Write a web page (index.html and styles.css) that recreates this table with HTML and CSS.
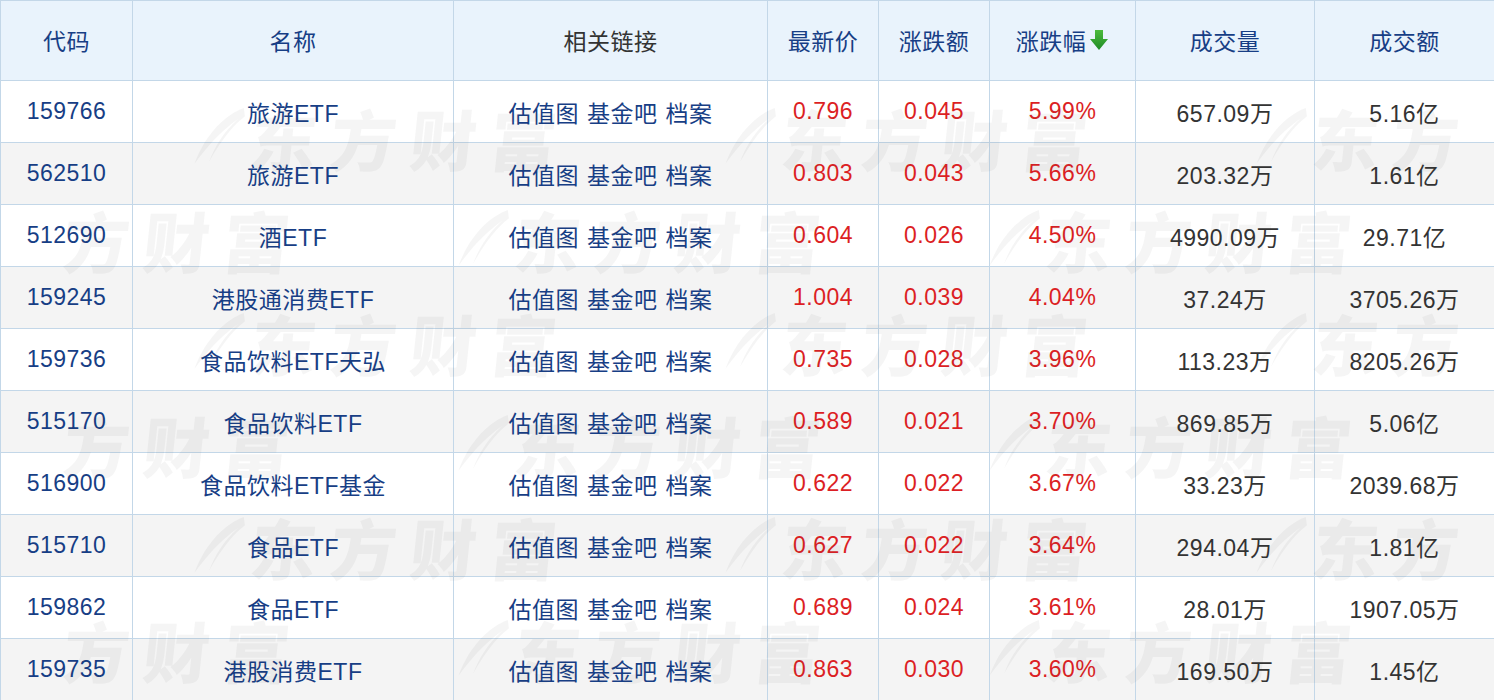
FILE: index.html
```html
<!DOCTYPE html>
<html lang="zh-CN">
<head>
<meta charset="utf-8">
<title>ETF</title>
<link rel="stylesheet" href="styles.css">
</head>
<body>
<div class="wrap">
<table class="grid">
  <colgroup>
    <col class="c1"><col class="c2"><col class="c3"><col class="c4"><col class="c5"><col class="c6"><col class="c7"><col class="c8">
  </colgroup>
  <thead>
    <tr>
      <th>代码</th>
      <th>名称</th>
      <th class="dark">相关链接</th>
      <th>最新价</th>
      <th>涨跌额</th>
      <th><span class="sort">涨跌幅<svg class="arrow" width="20" height="22" viewBox="0 0 20 22"><defs><linearGradient id="g" x1="0" y1="0" x2="0" y2="1"><stop offset="0" stop-color="#4cbb3c"/><stop offset="1" stop-color="#1f8a26"/></linearGradient></defs><path d="M6 1h8v9h5L10 21 1 10h5z" fill="url(#g)"/></svg></span></th>
      <th>成交量</th>
      <th>成交额</th>
    </tr>
  </thead>
  <tbody>
    <tr><td class="blue">159766</td><td class="blue">旅游ETF</td><td class="links"><a>估值图</a><a>基金吧</a><a>档案</a></td><td class="red">0.796</td><td class="red">0.045</td><td class="red">5.99%</td><td>657.09万</td><td>5.16亿</td></tr>
    <tr><td class="blue">562510</td><td class="blue">旅游ETF</td><td class="links"><a>估值图</a><a>基金吧</a><a>档案</a></td><td class="red">0.803</td><td class="red">0.043</td><td class="red">5.66%</td><td>203.32万</td><td>1.61亿</td></tr>
    <tr><td class="blue">512690</td><td class="blue">酒ETF</td><td class="links"><a>估值图</a><a>基金吧</a><a>档案</a></td><td class="red">0.604</td><td class="red">0.026</td><td class="red">4.50%</td><td>4990.09万</td><td>29.71亿</td></tr>
    <tr><td class="blue">159245</td><td class="blue">港股通消费ETF</td><td class="links"><a>估值图</a><a>基金吧</a><a>档案</a></td><td class="red">1.004</td><td class="red">0.039</td><td class="red">4.04%</td><td>37.24万</td><td>3705.26万</td></tr>
    <tr><td class="blue">159736</td><td class="blue">食品饮料ETF天弘</td><td class="links"><a>估值图</a><a>基金吧</a><a>档案</a></td><td class="red">0.735</td><td class="red">0.028</td><td class="red">3.96%</td><td>113.23万</td><td>8205.26万</td></tr>
    <tr><td class="blue">515170</td><td class="blue">食品饮料ETF</td><td class="links"><a>估值图</a><a>基金吧</a><a>档案</a></td><td class="red">0.589</td><td class="red">0.021</td><td class="red">3.70%</td><td>869.85万</td><td>5.06亿</td></tr>
    <tr><td class="blue">516900</td><td class="blue">食品饮料ETF基金</td><td class="links"><a>估值图</a><a>基金吧</a><a>档案</a></td><td class="red">0.622</td><td class="red">0.022</td><td class="red">3.67%</td><td>33.23万</td><td>2039.68万</td></tr>
    <tr><td class="blue">515710</td><td class="blue">食品ETF</td><td class="links"><a>估值图</a><a>基金吧</a><a>档案</a></td><td class="red">0.627</td><td class="red">0.022</td><td class="red">3.64%</td><td>294.04万</td><td>1.81亿</td></tr>
    <tr><td class="blue">159862</td><td class="blue">食品ETF</td><td class="links"><a>估值图</a><a>基金吧</a><a>档案</a></td><td class="red">0.689</td><td class="red">0.024</td><td class="red">3.61%</td><td>28.01万</td><td>1907.05万</td></tr>
    <tr><td class="blue">159735</td><td class="blue">港股消费ETF</td><td class="links"><a>估值图</a><a>基金吧</a><a>档案</a></td><td class="red">0.863</td><td class="red">0.030</td><td class="red">3.60%</td><td>169.50万</td><td>1.45亿</td></tr>
  </tbody>
</table>
<div class="wm" aria-hidden="true">
  <div class="wm-row odd"><span class="mark"><svg class="logo" viewBox="0 0 50 60"><path d="M46 2C30 8 12 26 4 56c10-16 20-30 38-44-12 12-20 26-24 42C26 36 36 20 48 10z"/></svg>东方财富</span><span class="mark"><svg class="logo" viewBox="0 0 50 60"><path d="M46 2C30 8 12 26 4 56c10-16 20-30 38-44-12 12-20 26-24 42C26 36 36 20 48 10z"/></svg>东方财富</span><span class="mark tail"><svg class="logo" viewBox="0 0 50 60"><path d="M46 2C30 8 12 26 4 56c10-16 20-30 38-44-12 12-20 26-24 42C26 36 36 20 48 10z"/></svg>东方</span></div>
  <div class="wm-row even"><span class="mark head">方财富</span><span class="mark"><svg class="logo" viewBox="0 0 50 60"><path d="M46 2C30 8 12 26 4 56c10-16 20-30 38-44-12 12-20 26-24 42C26 36 36 20 48 10z"/></svg>东方财富</span><span class="mark"><svg class="logo" viewBox="0 0 50 60"><path d="M46 2C30 8 12 26 4 56c10-16 20-30 38-44-12 12-20 26-24 42C26 36 36 20 48 10z"/></svg>东方财富</span></div>
  <div class="wm-row odd"><span class="mark"><svg class="logo" viewBox="0 0 50 60"><path d="M46 2C30 8 12 26 4 56c10-16 20-30 38-44-12 12-20 26-24 42C26 36 36 20 48 10z"/></svg>东方财富</span><span class="mark"><svg class="logo" viewBox="0 0 50 60"><path d="M46 2C30 8 12 26 4 56c10-16 20-30 38-44-12 12-20 26-24 42C26 36 36 20 48 10z"/></svg>东方财富</span><span class="mark tail"><svg class="logo" viewBox="0 0 50 60"><path d="M46 2C30 8 12 26 4 56c10-16 20-30 38-44-12 12-20 26-24 42C26 36 36 20 48 10z"/></svg>东方</span></div>
  <div class="wm-row even"><span class="mark head">方财富</span><span class="mark"><svg class="logo" viewBox="0 0 50 60"><path d="M46 2C30 8 12 26 4 56c10-16 20-30 38-44-12 12-20 26-24 42C26 36 36 20 48 10z"/></svg>东方财富</span><span class="mark"><svg class="logo" viewBox="0 0 50 60"><path d="M46 2C30 8 12 26 4 56c10-16 20-30 38-44-12 12-20 26-24 42C26 36 36 20 48 10z"/></svg>东方财富</span></div>
  <div class="wm-row odd"><span class="mark"><svg class="logo" viewBox="0 0 50 60"><path d="M46 2C30 8 12 26 4 56c10-16 20-30 38-44-12 12-20 26-24 42C26 36 36 20 48 10z"/></svg>东方财富</span><span class="mark"><svg class="logo" viewBox="0 0 50 60"><path d="M46 2C30 8 12 26 4 56c10-16 20-30 38-44-12 12-20 26-24 42C26 36 36 20 48 10z"/></svg>东方财富</span><span class="mark tail"><svg class="logo" viewBox="0 0 50 60"><path d="M46 2C30 8 12 26 4 56c10-16 20-30 38-44-12 12-20 26-24 42C26 36 36 20 48 10z"/></svg>东方</span></div>
  <div class="wm-row even"><span class="mark head">方财富</span><span class="mark"><svg class="logo" viewBox="0 0 50 60"><path d="M46 2C30 8 12 26 4 56c10-16 20-30 38-44-12 12-20 26-24 42C26 36 36 20 48 10z"/></svg>东方财富</span><span class="mark"><svg class="logo" viewBox="0 0 50 60"><path d="M46 2C30 8 12 26 4 56c10-16 20-30 38-44-12 12-20 26-24 42C26 36 36 20 48 10z"/></svg>东方财富</span></div>
</div>
</div>
</body>
</html>
```

FILE: styles.css
```css
html, body {
  margin: 0;
  padding: 0;
  background: #ffffff;
}

body {
  font-family: "Liberation Sans", "Noto Sans CJK SC", sans-serif;
  font-size: 23px;
  letter-spacing: 0.5px;
  color: #333333;
  overflow: hidden;
}

.wrap {
  position: relative;
  width: 1494px;
  height: 700px;
  overflow: hidden;
}

.grid {
  width: 1494px;
  border-collapse: collapse;
  table-layout: fixed;
}

.c1 { width: 132px; }
.c2 { width: 321px; }
.c3 { width: 314px; }
.c4 { width: 111px; }
.c5 { width: 111px; }
.c6 { width: 146px; }
.c7 { width: 179px; }
.c8 { width: 180px; }

.grid th,
.grid td {
  border: 1px solid #c3d7e8;
  text-align: center;
  vertical-align: middle;
  padding: 0;
  white-space: nowrap;
}

.grid th {
  height: 77px;
  padding-bottom: 2px;
  background: #e9f3fc;
  color: #173e85;
  font-weight: normal;
}

.grid th.dark {
  color: #333333;
}

.grid td {
  height: 61px;
}

.grid tbody tr:nth-child(even) td {
  background: #f4f4f4;
}

.blue {
  color: #173e85;
}

.red {
  color: #dc1f24;
}

.links a {
  color: #173e85;
  margin: 0 4px;
}

.sort {
  display: inline-flex;
  align-items: center;
  gap: 3px;
}

.arrow {
  display: block;
}

.wm {
  position: absolute;
  inset: 0;
  pointer-events: none;
  padding-top: 86px;
  display: flex;
  flex-direction: column;
}

.wm-row {
  height: 104px;
  display: flex;
  align-items: center;
  white-space: nowrap;
}

.wm-row.odd {
  margin-left: 193px;
}

.wm-row.even {
  margin-left: 0;
}

.mark {
  flex: none;
  width: 531px;
  display: flex;
  align-items: center;
  gap: 6px;
  font-family: "Noto Sans CJK SC", sans-serif;
  font-weight: 900;
  font-size: 66px;
  letter-spacing: 14px;
  line-height: 1;
  color: rgba(60, 60, 60, 0.05);
  transform: skewX(-6deg);
}

.mark.head {
  width: 393px;
  padding-left: 64px;
}

.mark.tail {
  width: auto;
}

.logo {
  width: 52px;
  height: 62px;
  fill: rgba(60, 60, 60, 0.05);
}
```
